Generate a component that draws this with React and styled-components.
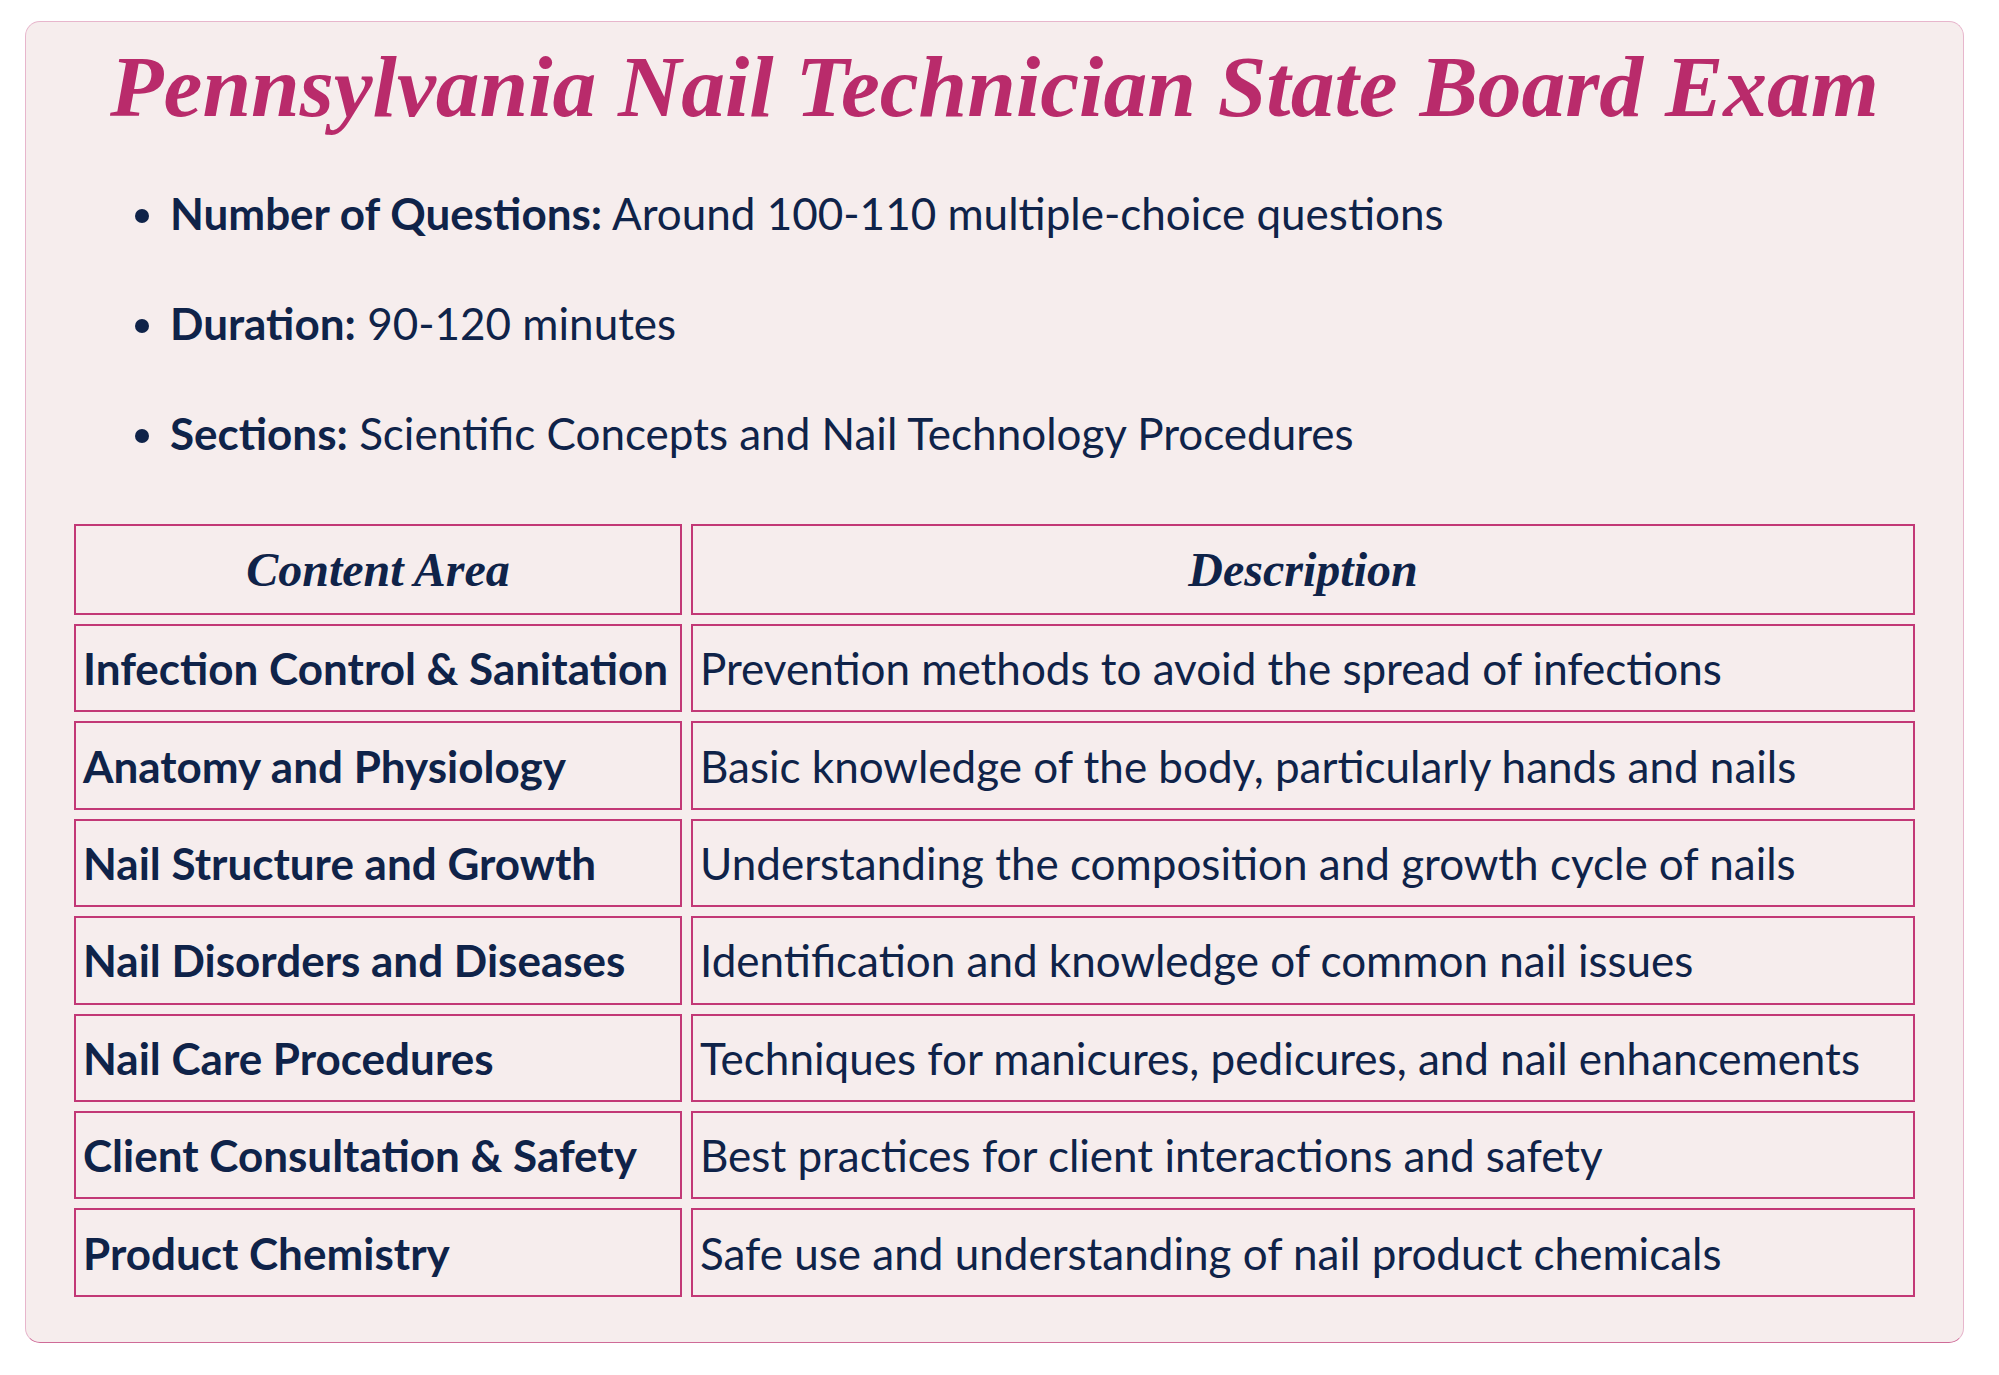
import React from "react";
import styled, { createGlobalStyle } from "styled-components";

const GlobalStyle = createGlobalStyle`
  body {
    margin: 0;
    background: #ffffff;
    font-family: Lato, "Open Sans", sans-serif;
  }
`;

const facts = [
  { label: "Number of Questions:", value: "Around 100-110 multiple-choice questions" },
  { label: "Duration:", value: "90-120 minutes" },
  { label: "Sections:", value: "Scientific Concepts and Nail Technology Procedures" },
];

const rows = [
  ["Infection Control & Sanitation", "Prevention methods to avoid the spread of infections"],
  ["Anatomy and Physiology", "Basic knowledge of the body, particularly hands and nails"],
  ["Nail Structure and Growth", "Understanding the composition and growth cycle of nails"],
  ["Nail Disorders and Diseases", "Identification and knowledge of common nail issues"],
  ["Nail Care Procedures", "Techniques for manicures, pedicures, and nail enhancements"],
  ["Client Consultation & Safety", "Best practices for client interactions and safety"],
  ["Product Chemistry", "Safe use and understanding of nail product chemicals"],
];

const App = () => {
  return (
    <Page>
      <GlobalStyle />
      <Card>
        <Title>Pennsylvania Nail Technician State Board Exam</Title>
        <FactList>
          {facts.map((f) => (
            <Fact key={f.label}>
              <strong>{f.label}</strong> {f.value}
            </Fact>
          ))}
        </FactList>
        <Table>
          <thead>
            <tr>
              <HeadCell>Content Area</HeadCell>
              <HeadCell>Description</HeadCell>
            </tr>
          </thead>
          <tbody>
            {rows.map(([area, desc]) => (
              <tr key={area}>
                <Cell $bold>{area}</Cell>
                <Cell>{desc}</Cell>
              </tr>
            ))}
          </tbody>
        </Table>
      </Card>
    </Page>
  );
};

const Page = styled.div`
  padding: 21px 0 34px 25px;
`;

const Card = styled.div`
  width: 1939px;
  box-sizing: border-box;
  background: #f6eded;
  border: 1.5px solid #e7b6cc;
  border-bottom-color: #cf6b98;
  border-radius: 15px;
  padding: 12px 48px 36px;
`;

const Title = styled.h1`
  margin: 0;
  text-align: center;
  font-family: "Liberation Serif", "DejaVu Serif", serif;
  font-style: italic;
  font-weight: 700;
  font-size: 87.5px;
  line-height: 1.2;
  color: #b92b6b;
`;

const FactList = styled.ul`
  margin: 50px 0 0;
  padding: 0 0 0 96px;
  list-style: disc;
  color: #0f2349;
`;

const Fact = styled.li`
  font-size: 44px;
  line-height: 48px;
  margin-bottom: 62px;

  strong {
    font-weight: 700;
  }
`;

const Table = styled.table`
  border-collapse: separate;
  border-spacing: 9px;
  margin: -4px -9px 0;
  width: calc(100% + 18px);
  color: #0f2349;
  font-family: Lato, sans-serif;
`;

const HeadCell = styled.th`
  border: 2.5px solid #c23876;
  height: 87px;
  padding: 0;
  font-family: "Liberation Serif", "DejaVu Serif", serif;
  font-style: italic;
  font-weight: 700;
  font-size: 48px;
  text-align: center;

  &:first-child {
    width: 604px;
  }
`;

const Cell = styled.td`
  border: 2.5px solid #c23876;
  height: 84.4px;
  padding: 0 7px;
  font-size: 44px;
  font-weight: ${(p) => (p.$bold ? 700 : 400)};
  white-space: nowrap;
`;

export default App;
